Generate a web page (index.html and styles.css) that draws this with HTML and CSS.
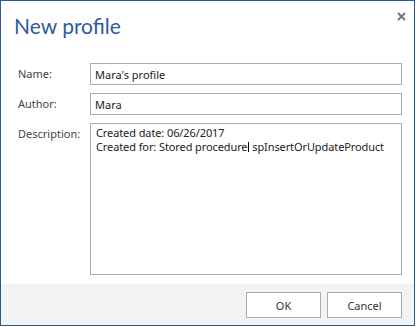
FILE: index.html
```html
<!DOCTYPE html>
<html lang="en">
<head>
    <meta charset="UTF-8">
    <title>New profile</title>
    <link rel="stylesheet" href="styles.css">
</head>
<body>
    <div class="dialog">
        <div class="dialog-header">
            <div class="dialog-title">New profile</div>
            <button class="close-btn" title="Close">
                <svg width="9" height="9" viewBox="0 0 9 9">
                    <path d="M1 1 L8 8 M8 1 L1 8" stroke="#777" stroke-width="2" fill="none"/>
                </svg>
            </button>
        </div>
        <div class="dialog-body">
            <label class="field-label" for="profileName">Name:</label>
            <input class="field-input" type="text" id="profileName" value="Mara's profile">
            <label class="field-label" for="profileAuthor">Author:</label>
            <input class="field-input" type="text" id="profileAuthor" value="Mara">
            <label class="field-label" for="profileDesc">Description:</label>
            <div class="field-area" id="profileDesc">
                <div>Created date: 06/26/2017</div>
                <div>Created for: Stored procedure<span class="caret"></span> spInsertOrUpdateProduct</div>
            </div>
        </div>
        <div class="dialog-footer">
            <button class="btn">OK</button>
            <button class="btn">Cancel</button>
        </div>
    </div>
</body>
</html>
```

FILE: styles.css
```css
body {
    margin: 0;
    background-color: #fff;
    font-family: "Noto Sans", "Open Sans", Arial, sans-serif;
    font-size: 11px;
    color: #444;
}
.dialog {
    width: 415px;
    height: 326px;
    box-sizing: border-box;
    border: 1px solid #2b579a;
    display: flex;
    flex-direction: column;
    background-color: #fff;
}
.dialog-header {
    height: 62px;
    display: flex;
    justify-content: space-between;
    align-items: flex-start;
    padding-left: 13px;
}
.dialog-title {
    font-family: Lato, "Noto Sans", sans-serif;
    font-size: 21px;
    line-height: 30px;
    margin-top: 10px;
    color: #2e5c9e;
}
.close-btn {
    border: none;
    background: none;
    padding: 0;
    margin: 11px 8px 0 0;
    width: 9px;
    height: 9px;
    display: flex;
    cursor: pointer;
}
.dialog-body {
    display: grid;
    grid-template-columns: 72px 312px;
    grid-template-rows: 22px 22px 152px;
    row-gap: 8px;
    padding-left: 17px;
}
.field-label {
    line-height: 22px;
    color: #444;
}
.field-input, .field-area {
    box-sizing: border-box;
    border: 1px solid #ababab;
    font-family: inherit;
    font-size: 11px;
    color: #222;
    margin: 0;
}
.field-input {
    height: 22px;
    padding: 0 4px;
}
.field-area {
    padding: 2px 5px;
    line-height: 14px;
    letter-spacing: -0.1px;
    white-space: nowrap;
}
.caret {
    display: inline-block;
    width: 1px;
    height: 10px;
    background-color: #000;
    vertical-align: -1px;
    margin-left: 1px;
}
.dialog-footer {
    margin-top: auto;
    height: 41px;
    background-color: #f3f3f3;
    display: flex;
    justify-content: flex-end;
    align-items: flex-start;
    gap: 6px;
    padding: 8px 12px 0 0;
    box-sizing: border-box;
}
.btn {
    width: 75px;
    height: 26px;
    border: 1px solid #adadad;
    background-color: #fff;
    font-family: inherit;
    font-size: 11px;
    color: #333;
    padding: 0;
}
```
